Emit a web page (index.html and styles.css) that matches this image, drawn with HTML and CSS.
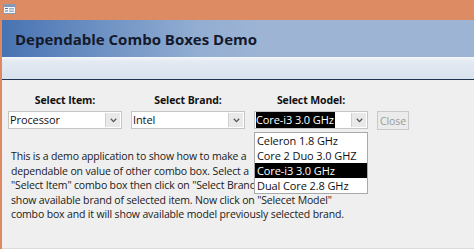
FILE: index.html
```html
<!DOCTYPE html>
<html>
<head>
<meta charset="utf-8">
<link rel="stylesheet" href="styles.css">
</head>
<body>
<div class="titlebar">
  <svg class="form-icon" width="13" height="10" viewBox="0 0 13 10">
    <rect x="0.5" y="0.5" width="12" height="9" fill="#f4f6f9" stroke="#8a9bb4"/>
    <rect x="1" y="1" width="11" height="2" fill="#7f97bd"/>
    <rect x="2" y="4" width="3" height="1" fill="#5d7396"/>
    <rect x="6" y="4" width="5" height="1.5" fill="#9fb0c9"/>
    <rect x="2" y="6.5" width="3" height="1" fill="#5d7396"/>
    <rect x="6" y="6.5" width="5" height="1.5" fill="#9fb0c9"/>
  </svg>
</div>
<div class="window">
  <div class="header"><h1 class="title">Dependable Combo Boxes Demo</h1></div>
  <div class="band"></div>
  <div class="content">
    <div class="controls">
      <div class="field">
        <div class="label">Select Item:</div>
        <div class="combo"><span class="value">Processor</span><span class="drop"><svg width="7" height="5" viewBox="0 0 7 5"><path d="M0.8 0.8 L3.5 3.6 L6.2 0.8" fill="none" stroke="#555" stroke-width="1.3"/></svg></span></div>
      </div>
      <div class="field">
        <div class="label">Select Brand:</div>
        <div class="combo"><span class="value">Intel</span><span class="drop"><svg width="7" height="5" viewBox="0 0 7 5"><path d="M0.8 0.8 L3.5 3.6 L6.2 0.8" fill="none" stroke="#555" stroke-width="1.3"/></svg></span></div>
      </div>
      <div class="field model">
        <div class="label">Select Model:</div>
        <div class="combo"><span class="value"><span class="sel">Core-i3 3.0 GHz</span></span><span class="drop"><svg width="7" height="5" viewBox="0 0 7 5"><path d="M0.8 0.8 L3.5 3.6 L6.2 0.8" fill="none" stroke="#555" stroke-width="1.3"/></svg></span></div>
        <ul class="list">
          <li>Celeron 1.8 GHz</li>
          <li>Core 2 Duo 3.0 GHZ</li>
          <li class="active">Core-i3 3.0 GHz</li>
          <li>Dual Core 2.8 GHz</li>
        </ul>
      </div>
      <button class="close" disabled>Close</button>
    </div>
    <p class="desc">This is a demo application to show how to make a<br>dependable on value of other combo box. Select a<br>"Select Item" combo box then click on "Select Brand<br>show available brand of selected item. Now click on "Selecet Model"<br>combo box and it will show available model previously selected brand.</p>
  </div>
</div>
</body>
</html>
```
FILE: styles.css
```css
html, body {
  margin: 0;
  padding: 0;
}
body {
  width: 474px;
  height: 249px;
  overflow: hidden;
  background: #dd8a62;
  font-family: "Open Sans", "Noto Sans", sans-serif;
}
.titlebar {
  height: 20px;
  background: #dd8b63;
  display: flex;
  align-items: flex-start;
  padding: 4px 0 0 3px;
  box-sizing: border-box;
}
.form-icon {
  display: block;
}
.window {
  margin-left: 2px;
  height: 229px;
  display: flex;
  flex-direction: column;
  background: #efefef;
}
.header {
  height: 37px;
  background: linear-gradient(90deg, #4873b2 0%, #6f93c4 22%, #93aed2 42%, #9db4d4 55%, #9db4d4 100%);
  display: flex;
  align-items: center;
  padding-left: 13px;
  box-sizing: border-box;
}
.title {
  margin: 0;
  font-size: 15px;
  font-weight: 700;
  color: #141a2c;
  letter-spacing: 0px;
}
.band {
  height: 22px;
  background: linear-gradient(180deg, #f4f7fb 0%, #e4eaf2 20%, #d9e2ed 100%);
  border-bottom: 1px solid #1f3452;
  box-sizing: content-box;
}
.content {
  flex: 1;
  padding: 12px 0 0 6px;
  border-bottom: 1px solid #dcdcdc;
}
.controls {
  display: flex;
  align-items: flex-end;
  gap: 9px;
}
.field {
  width: 114px;
  display: flex;
  flex-direction: column;
  align-items: stretch;
}
.field.model {
  position: relative;
}
.label {
  text-align: center;
  font-size: 10.5px;
  font-weight: 700;
  color: #111;
  height: 17px;
  line-height: 17px;
  margin-bottom: 2px;
  letter-spacing: -0.1px;
}
.combo {
  height: 18px;
  box-sizing: border-box;
  background: #fff;
  border: 1px solid #c5c5c5;
  display: flex;
  align-items: stretch;
}
.value {
  flex: 1;
  font-size: 11px;
  line-height: 16px;
  padding-left: 1px;
  color: #111;
  white-space: nowrap;
  letter-spacing: -0.1px;
}
.sel {
  background: #000;
  color: #fff;
  display: inline-block;
  padding-right: 1px;
}
.drop {
  width: 14px;
  background: #e9e9e9;
  border-left: 1px solid #d0d0d0;
  display: flex;
  align-items: center;
  justify-content: center;
  margin: 1px 1px 1px 0;
}
.drop svg {
  display: block;
}
.close {
  margin: 0 0 -1px 0;
  width: 32px;
  height: 19px;
  padding: 0;
  background: #ebebeb;
  border: 1px solid #c9c9c9;
  color: #9a9a9a;
  font-family: "Open Sans", "Noto Sans", sans-serif;
  font-size: 10.5px;
  letter-spacing: -0.1px;
}
.list {
  position: absolute;
  left: 0;
  top: 40px;
  width: 114px;
  box-sizing: border-box;
  margin: 0;
  padding: 0;
  list-style: none;
  background: #fff;
  border: 1px solid #a9a9a9;
  z-index: 2;
}
.list li {
  height: 15px;
  line-height: 15px;
  font-size: 11px;
  padding-left: 2px;
  color: #111;
  white-space: nowrap;
  letter-spacing: -0.1px;
}
.list li.active {
  background: #000;
  color: #fff;
}
.desc {
  margin: 20px 0 0 3px;
  font-size: 10.5px;
  line-height: 14.5px;
  color: #1a1a1a;
  white-space: nowrap;
  letter-spacing: -0.15px;
}
```
